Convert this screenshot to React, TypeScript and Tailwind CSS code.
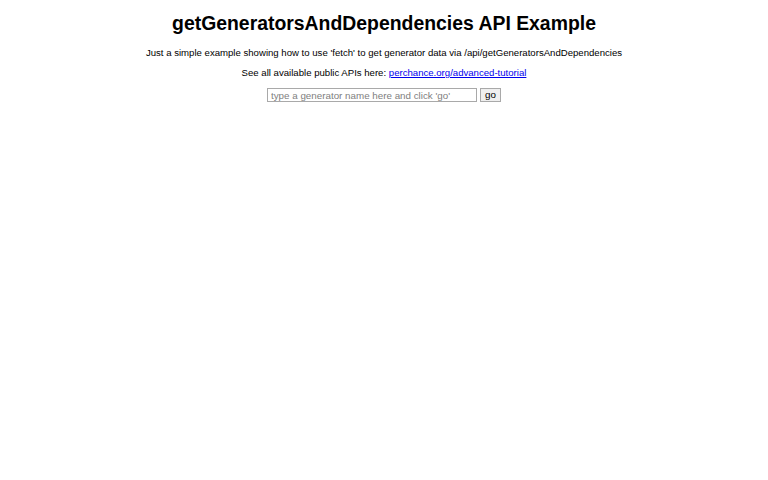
import { useState } from 'react'

export default function App() {
  const [name, setName] = useState('')

  return (
    <div className="min-h-[480px] bg-white text-center text-black font-['Liberation_Sans',Arial,sans-serif]">
      <h1 className="pt-[12px] text-[19.4px] leading-[22px] font-bold">getGeneratorsAndDependencies API Example</h1>
      <p className="mt-[13px] text-[9.6px] leading-[11px]">
        Just a simple example showing how to use 'fetch' to get generator data via /api/getGeneratorsAndDependencies
      </p>
      <p className="mt-[9px] text-[9.6px] leading-[11px]">
        See all available public APIs here:{' '}
        <a href="#" className="text-[#0000ee] underline">perchance.org/advanced-tutorial</a>
      </p>
      <div className="mt-[10px] flex justify-center items-center gap-[3px]">
        <input
          value={name}
          onChange={(e) => setName(e.target.value)}
          placeholder="type a generator name here and click 'go'"
          className="w-[210px] h-[14px] border border-[#a9a9a9] px-[3px] text-[9.8px] leading-[12px] placeholder:text-[#808080] outline-none"
        />
        <button className="h-[14px] w-[21px] border border-[#a9a9a9] bg-[#efefef] text-[9.8px] leading-[12px]">go</button>
      </div>
    </div>
  )
}
